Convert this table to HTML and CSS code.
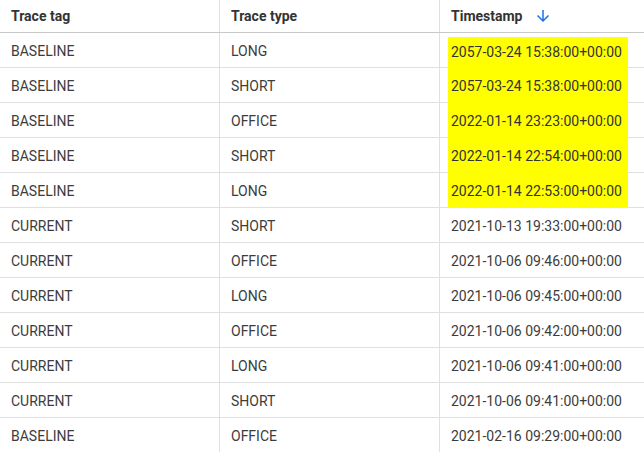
FILE: index.html
```html
<!DOCTYPE html>
<html>
<head>
<meta charset="utf-8">
<link rel="stylesheet" href="styles.css">
</head>
<body>
<div class="table">
  <div class="row head">
    <div class="cell">Trace tag</div>
    <div class="cell">Trace type</div>
    <div class="cell last">Timestamp
      <svg class="sort" viewBox="0 0 24 24" width="18" height="18"><path d="M20 12l-1.41-1.41L13 16.17V4h-2v12.17l-5.58-5.59L4 12l8 8 8-8z" fill="#1a73e8"/></svg>
    </div>
  </div>
  <div class="row"><div class="cell">BASELINE</div><div class="cell">LONG</div><div class="cell last hlcell"><div class="hl first">2057-03-24 15:38:00+00:00</div></div></div>
  <div class="row"><div class="cell">BASELINE</div><div class="cell">SHORT</div><div class="cell last hlcell"><div class="hl">2057-03-24 15:38:00+00:00</div></div></div>
  <div class="row"><div class="cell">BASELINE</div><div class="cell">OFFICE</div><div class="cell last hlcell"><div class="hl">2022-01-14 23:23:00+00:00</div></div></div>
  <div class="row"><div class="cell">BASELINE</div><div class="cell">SHORT</div><div class="cell last hlcell"><div class="hl">2022-01-14 22:54:00+00:00</div></div></div>
  <div class="row"><div class="cell">BASELINE</div><div class="cell">LONG</div><div class="cell last hlcell"><div class="hl">2022-01-14 22:53:00+00:00</div></div></div>
  <div class="row"><div class="cell">CURRENT</div><div class="cell">SHORT</div><div class="cell last">2021-10-13 19:33:00+00:00</div></div>
  <div class="row"><div class="cell">CURRENT</div><div class="cell">OFFICE</div><div class="cell last">2021-10-06 09:46:00+00:00</div></div>
  <div class="row"><div class="cell">CURRENT</div><div class="cell">LONG</div><div class="cell last">2021-10-06 09:45:00+00:00</div></div>
  <div class="row"><div class="cell">CURRENT</div><div class="cell">OFFICE</div><div class="cell last">2021-10-06 09:42:00+00:00</div></div>
  <div class="row"><div class="cell">CURRENT</div><div class="cell">LONG</div><div class="cell last">2021-10-06 09:41:00+00:00</div></div>
  <div class="row"><div class="cell">CURRENT</div><div class="cell">SHORT</div><div class="cell last">2021-10-06 09:41:00+00:00</div></div>
  <div class="row"><div class="cell">BASELINE</div><div class="cell">OFFICE</div><div class="cell last">2021-02-16 09:29:00+00:00</div></div>
</div>
</body>
</html>
```

FILE: styles.css
```css
html, body {
  margin: 0;
  padding: 0;
  background: #fff;
}
body {
  font-family: Roboto, "Liberation Sans", sans-serif;
  font-size: 14px;
  color: #3c3c3c;
  overflow: hidden;
}
.table {
  width: 644px;
  display: flex;
  flex-direction: column;
}
.row {
  display: flex;
  height: 34px;
  border-bottom: 1px solid #e0e0e0;
}
.row .cell {
  padding-top: 1px;
}
.row.head {
  height: 32px;
  border-bottom: 1px solid #c8c8c8;
  font-weight: bold;
  color: #333;
}
.row.head .cell {
  padding-top: 0;
}
.cell {
  border-right: 1px solid #e0e0e0;
  display: flex;
  align-items: center;
  padding-left: 11px;
  box-sizing: content-box;
  width: 208px;
}
.cell.last {
  border-right: none;
  flex: 1;
}
.sort {
  margin-left: 11px;
}
.row .hlcell {
  padding-left: 8px;
  padding-top: 0;
  align-items: stretch;
}
.hl {
  background: #ffff00;
  display: flex;
  align-items: center;
  padding: 1px 6px 0 3px;
  margin-bottom: -1px;
  color: #333;
}
.hl.first {
  margin-top: 4px;
  padding-bottom: 3px;
}
```
